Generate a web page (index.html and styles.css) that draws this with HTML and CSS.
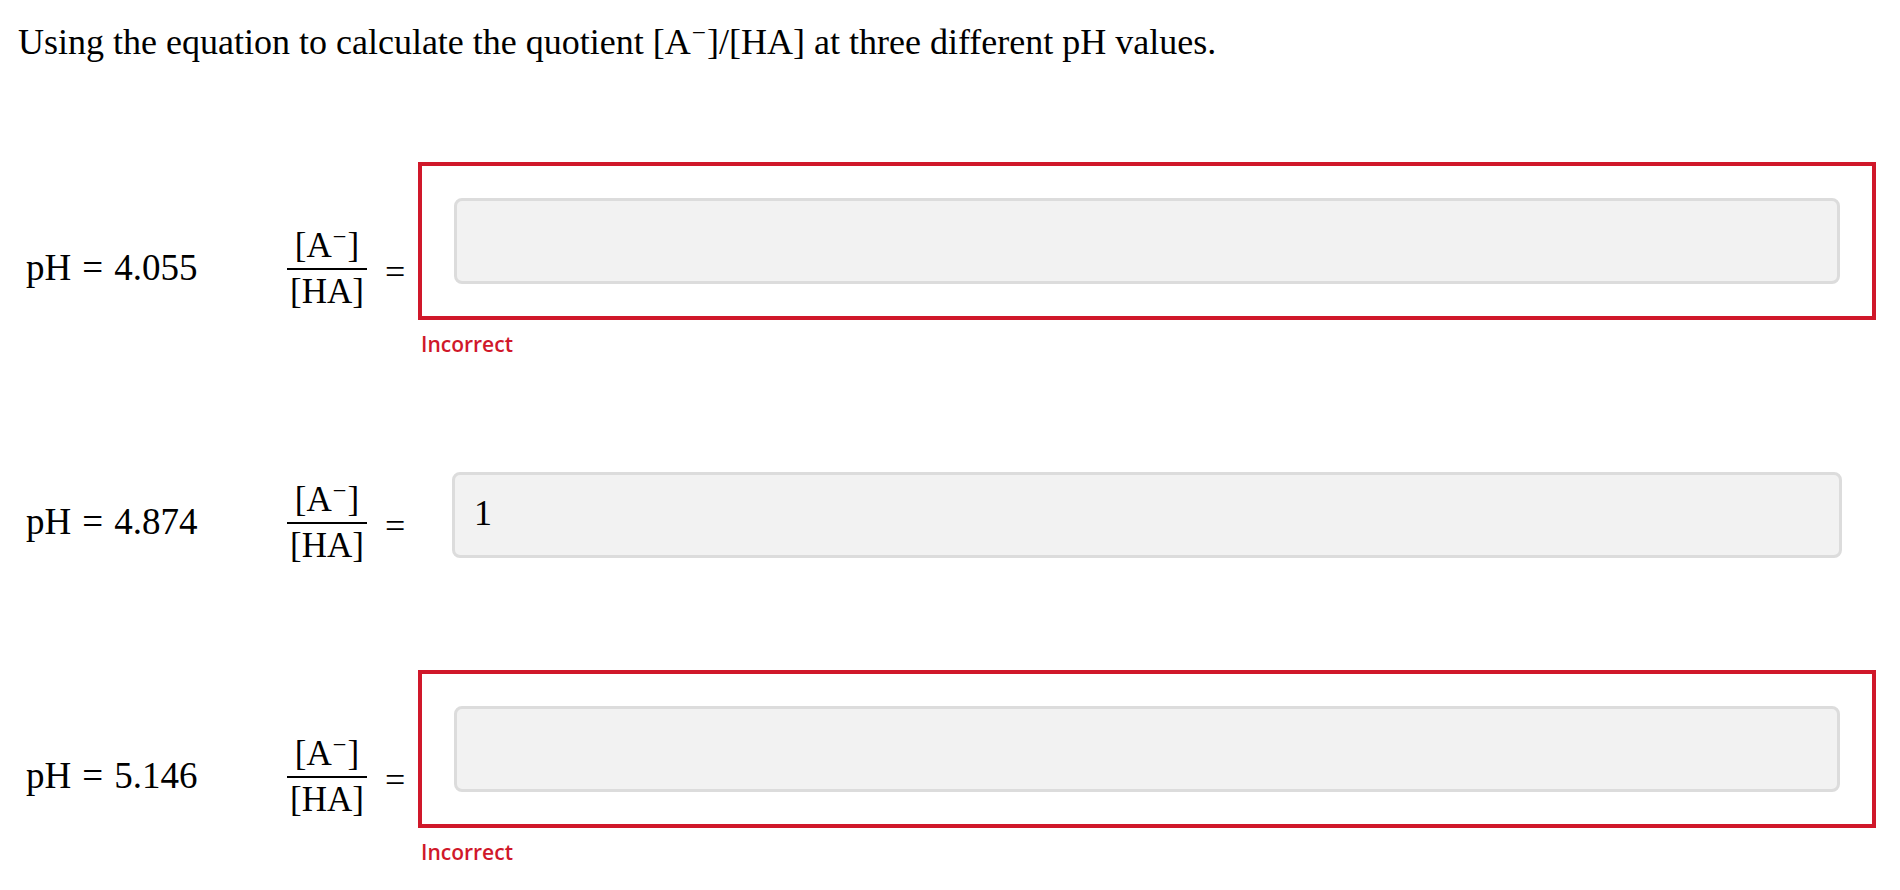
FILE: index.html
```html
<!DOCTYPE html>
<html lang="en">
<head>
<meta charset="utf-8">
<title>Quotient at three pH values</title>
<link rel="stylesheet" href="styles.css">
</head>
<body>
<div class="page">
  <p class="intro">Using the equation to calculate the quotient [A<sup>−</sup>]/[HA] at three different pH values.</p>
  <div class="rows">
    <div class="row">
      <div class="label">pH<span class="rel">=</span>4.055</div>
      <div class="frac"><span class="num">[A<sup>−</sup>]</span><span class="den">[HA]</span></div>
      <div class="eq">=</div>
      <div class="field">
        <div class="box box-error"><input class="answer" type="text" value="" aria-label="quotient at pH 4.055"></div>
        <div class="feedback">Incorrect</div>
      </div>
    </div>
    <div class="row">
      <div class="label">pH<span class="rel">=</span>4.874</div>
      <div class="frac"><span class="num">[A<sup>−</sup>]</span><span class="den">[HA]</span></div>
      <div class="eq">=</div>
      <div class="field">
        <div class="box box-plain"><input class="answer" type="text" value="1" aria-label="quotient at pH 4.874"></div>
        <div class="feedback feedback-empty"></div>
      </div>
    </div>
    <div class="row">
      <div class="label">pH<span class="rel">=</span>5.146</div>
      <div class="frac"><span class="num">[A<sup>−</sup>]</span><span class="den">[HA]</span></div>
      <div class="eq">=</div>
      <div class="field">
        <div class="box box-error"><input class="answer" type="text" value="" aria-label="quotient at pH 5.146"></div>
        <div class="feedback">Incorrect</div>
      </div>
    </div>
  </div>
</div>
</body>
</html>
```
FILE: styles.css
```css
html, body {
  margin: 0;
  padding: 0;
  background: #ffffff;
}

body {
  font-family: "Liberation Serif", "Times New Roman", serif;
  color: #000000;
}

.page {
  padding-top: 22px;
}

.intro {
  margin: 0;
  padding-left: 18px;
  font-size: 36px;
  line-height: 41px;
}

sup {
  font-size: 0.7em;
  line-height: 0;
  vertical-align: 0.5em;
  padding: 0 0.04em;
}

.rows {
  margin-top: 99px;
  display: flex;
  flex-direction: column;
  gap: 44px;
}

.row {
  display: flex;
  align-items: center;
  min-height: 210px;
  padding-left: 26px;
  padding-right: 24px;
}

.label {
  width: 261px;
  flex: none;
  font-size: 37px;
  line-height: 41px;
  white-space: nowrap;
}

.rel {
  margin: 0 0.3em;
}

.frac {
  flex: none;
  width: 80px;
  display: flex;
  flex-direction: column;
  align-items: stretch;
  font-size: 35px;
  line-height: 36px;
  text-align: center;
  margin-top: 4px;
  white-space: nowrap;
}

.num {
  padding-bottom: 4px;
  border-bottom: 2px solid #000000;
}

.den {
  padding-top: 4px;
}

.eq {
  flex: none;
  font-size: 36px;
  line-height: 41px;
  margin-left: 18px;
  margin-right: 13px;
  margin-top: 10px;
  width: 20px;
}

.field {
  flex: 1;
  display: flex;
  flex-direction: column;
}

.box {
  display: flex;
}

.box-error {
  border: 4px solid #d0182a;
  padding: 32px;
}

.box-plain {
  padding: 34px;
}

.answer {
  flex: 1;
  box-sizing: border-box;
  height: 86px;
  margin: 0;
  border: 3px solid #dcdcdc;
  border-radius: 8px;
  background: #f2f2f2;
  font-family: "Liberation Serif", "Times New Roman", serif;
  font-size: 36px;
  color: #000000;
  padding: 0 19px 4px 19px;
  outline: none;
}

.feedback {
  margin: 10px 0 14px;
  padding-left: 3px;
  font-family: "Open Sans", "Liberation Sans", sans-serif;
  font-weight: 600;
  font-size: 21px;
  line-height: 28px;
  color: #d0182a;
}

.feedback-empty {
  margin: 0;
  height: 12px;
}
```
